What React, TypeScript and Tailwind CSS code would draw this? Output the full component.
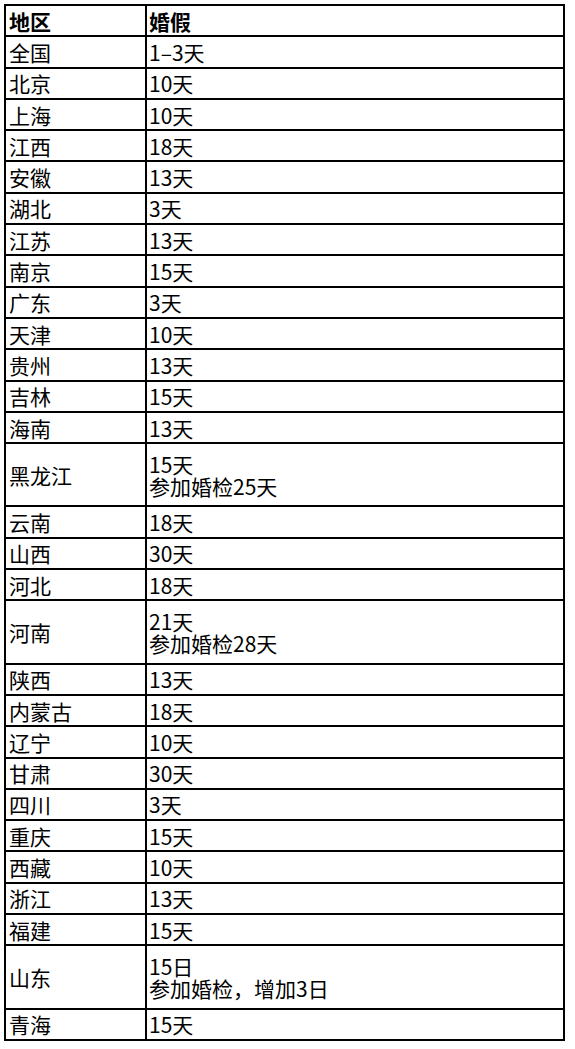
const rows: { region: string; days: string[] }[] = [
  { region: "全国", days: ["1–3天"] },
  { region: "北京", days: ["10天"] },
  { region: "上海", days: ["10天"] },
  { region: "江西", days: ["18天"] },
  { region: "安徽", days: ["13天"] },
  { region: "湖北", days: ["3天"] },
  { region: "江苏", days: ["13天"] },
  { region: "南京", days: ["15天"] },
  { region: "广东", days: ["3天"] },
  { region: "天津", days: ["10天"] },
  { region: "贵州", days: ["13天"] },
  { region: "吉林", days: ["15天"] },
  { region: "海南", days: ["13天"] },
  { region: "黑龙江", days: ["15天", "参加婚检25天"] },
  { region: "云南", days: ["18天"] },
  { region: "山西", days: ["30天"] },
  { region: "河北", days: ["18天"] },
  { region: "河南", days: ["21天", "参加婚检28天"] },
  { region: "陕西", days: ["13天"] },
  { region: "内蒙古", days: ["18天"] },
  { region: "辽宁", days: ["10天"] },
  { region: "甘肃", days: ["30天"] },
  { region: "四川", days: ["3天"] },
  { region: "重庆", days: ["15天"] },
  { region: "西藏", days: ["10天"] },
  { region: "浙江", days: ["13天"] },
  { region: "福建", days: ["15天"] },
  { region: "山东", days: ["15日", "参加婚检，增加3日"] },
  { region: "青海", days: ["15天"] },
];

export default function App() {
  return (
    <div
      className="min-h-[1049px] bg-white pl-[4px] pt-[4px] text-black"
      style={{ fontFamily: '"Noto Sans CJK SC", "Noto Sans", sans-serif' }}
    >
      <div className="w-[561px] border-2 border-black text-[21px] leading-[22px]">
        <div className="flex h-[29.3px] font-bold">
          <div className="flex w-[141px] items-center border-r-2 border-black pl-[3px]">地区</div>
          <div className="flex flex-1 items-center pl-[2px]">婚假</div>
        </div>
        {rows.map((r) => (
          <div
            key={r.region}
            className={`flex border-t-2 border-black ${r.days.length > 1 ? "h-[63.3px]" : "h-[31.3px]"}`}
          >
            <div className="flex w-[141px] items-center border-r-2 border-black pl-[3px]">{r.region}</div>
            <div className="flex flex-1 flex-col justify-center pl-[2px]">
              {r.days.map((d) => (
                <div key={d}>{d}</div>
              ))}
            </div>
          </div>
        ))}
      </div>
    </div>
  );
}
